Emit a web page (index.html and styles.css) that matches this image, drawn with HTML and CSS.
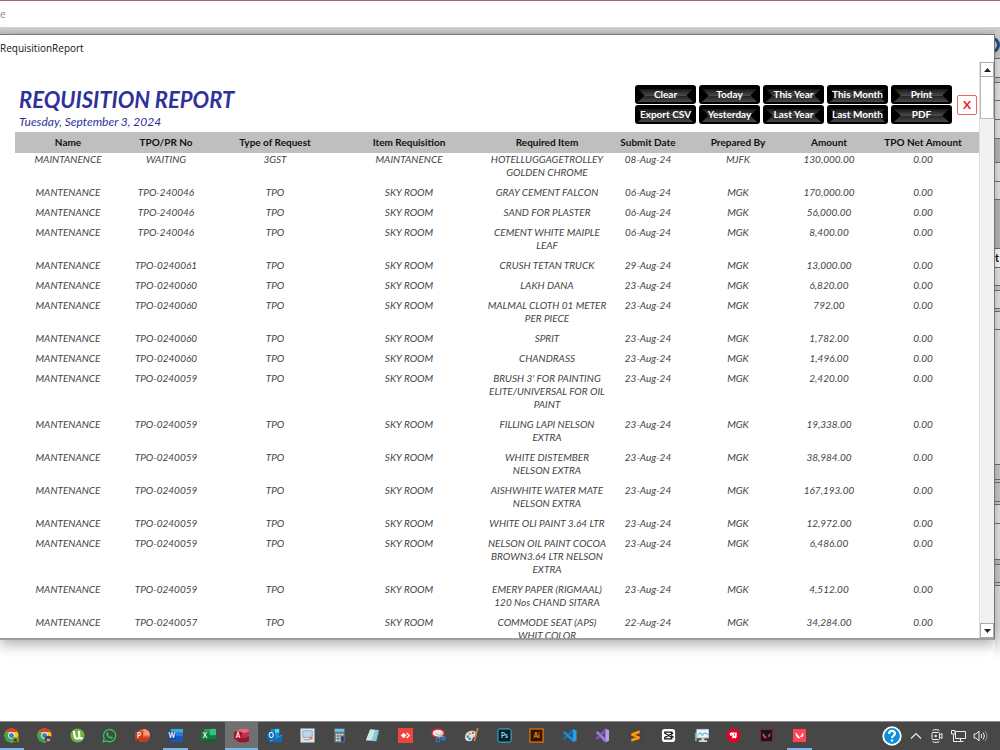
FILE: index.html
```
<!DOCTYPE html>
<html lang="en">
    <head>
        <meta charset="utf-8">
        <title>RequisitionReport</title>
        <link rel="stylesheet" href="styles.css">
    </head>
    <body>
        <div class="app-bar">e</div>

        <div class="workspace">
            <!-- report window -->
            <main class="window">
                <div class="caption">RequisitionReport</div>
                <div class="window-body">
                    <div class="report">
                        <div class="report-header">
                            <div class="heading">
                                <h1>REQUISITION REPORT</h1>
                                <p>Tuesday, September 3, 2024</p>
                            </div>
                            <div class="actions">
                                <button>Clear</button>
                                <button>Today</button>
                                <button>This Year</button>
                                <button>This Month</button>
                                <button>Print</button>
                                <button>Export CSV</button>
                                <button>Yesterday</button>
                                <button>Last Year</button>
                                <button>Last Month</button>
                                <button>PDF</button>
                            </div>
                            <button class="close">X</button>
                        </div>
                        <table class="list">
                            <colgroup>
                                <col class="col-name"><col class="col-no"><col class="col-type"><col class="col-req"><col class="col-item"><col class="col-date"><col class="col-by"><col class="col-amount"><col class="col-net">
                            </colgroup>
                            <thead>
                                <tr><th>Name</th><th>TPO/PR No</th><th>Type of Request</th><th>Item Requisition</th><th>Required Item</th><th>Submit Date</th><th>Prepared By</th><th>Amount</th><th>TPO Net Amount</th></tr>
                            </thead>
                            <tbody>
                                <tr><td>MAINTANENCE</td><td>WAITING</td><td>3GST</td><td>MAINTANENCE</td><td>HOTELLUGGAGETROLLEY GOLDEN CHROME</td><td>08-Aug-24</td><td>MJFK</td><td>130,000.00</td><td>0.00</td></tr>
                                <tr><td>MANTENANCE</td><td>TPO-240046</td><td>TPO</td><td>SKY ROOM</td><td>GRAY CEMENT FALCON</td><td>06-Aug-24</td><td>MGK</td><td>170,000.00</td><td>0.00</td></tr>
                                <tr><td>MANTENANCE</td><td>TPO-240046</td><td>TPO</td><td>SKY ROOM</td><td>SAND FOR PLASTER</td><td>06-Aug-24</td><td>MGK</td><td>56,000.00</td><td>0.00</td></tr>
                                <tr><td>MANTENANCE</td><td>TPO-240046</td><td>TPO</td><td>SKY ROOM</td><td>CEMENT WHITE MAIPLE LEAF</td><td>06-Aug-24</td><td>MGK</td><td>8,400.00</td><td>0.00</td></tr>
                                <tr><td>MANTENANCE</td><td>TPO-0240061</td><td>TPO</td><td>SKY ROOM</td><td>CRUSH TETAN TRUCK</td><td>29-Aug-24</td><td>MGK</td><td>13,000.00</td><td>0.00</td></tr>
                                <tr><td>MANTENANCE</td><td>TPO-0240060</td><td>TPO</td><td>SKY ROOM</td><td>LAKH DANA</td><td>23-Aug-24</td><td>MGK</td><td>6,820.00</td><td>0.00</td></tr>
                                <tr><td>MANTENANCE</td><td>TPO-0240060</td><td>TPO</td><td>SKY ROOM</td><td>MALMAL CLOTH 01 METER PER PIECE</td><td>23-Aug-24</td><td>MGK</td><td>792.00</td><td>0.00</td></tr>
                                <tr><td>MANTENANCE</td><td>TPO-0240060</td><td>TPO</td><td>SKY ROOM</td><td>SPRIT</td><td>23-Aug-24</td><td>MGK</td><td>1,782.00</td><td>0.00</td></tr>
                                <tr><td>MANTENANCE</td><td>TPO-0240060</td><td>TPO</td><td>SKY ROOM</td><td>CHANDRASS</td><td>23-Aug-24</td><td>MGK</td><td>1,496.00</td><td>0.00</td></tr>
                                <tr><td>MANTENANCE</td><td>TPO-0240059</td><td>TPO</td><td>SKY ROOM</td><td>BRUSH 3' FOR PAINTING ELITE/UNIVERSAL FOR OIL PAINT</td><td>23-Aug-24</td><td>MGK</td><td>2,420.00</td><td>0.00</td></tr>
                                <tr><td>MANTENANCE</td><td>TPO-0240059</td><td>TPO</td><td>SKY ROOM</td><td>FILLING LAPI NELSON EXTRA</td><td>23-Aug-24</td><td>MGK</td><td>19,338.00</td><td>0.00</td></tr>
                                <tr><td>MANTENANCE</td><td>TPO-0240059</td><td>TPO</td><td>SKY ROOM</td><td>WHITE DISTEMBER NELSON EXTRA</td><td>23-Aug-24</td><td>MGK</td><td>38,984.00</td><td>0.00</td></tr>
                                <tr><td>MANTENANCE</td><td>TPO-0240059</td><td>TPO</td><td>SKY ROOM</td><td>AISHWHITE WATER MATE NELSON EXTRA</td><td>23-Aug-24</td><td>MGK</td><td>167,193.00</td><td>0.00</td></tr>
                                <tr><td>MANTENANCE</td><td>TPO-0240059</td><td>TPO</td><td>SKY ROOM</td><td>WHITE OLI PAINT 3.64 LTR</td><td>23-Aug-24</td><td>MGK</td><td>12,972.00</td><td>0.00</td></tr>
                                <tr><td>MANTENANCE</td><td>TPO-0240059</td><td>TPO</td><td>SKY ROOM</td><td>NELSON OIL PAINT COCOA BROWN3.64 LTR NELSON EXTRA</td><td>23-Aug-24</td><td>MGK</td><td>6,486.00</td><td>0.00</td></tr>
                                <tr><td>MANTENANCE</td><td>TPO-0240059</td><td>TPO</td><td>SKY ROOM</td><td>EMERY PAPER (RIGMAAL) 120 Nos CHAND SITARA</td><td>23-Aug-24</td><td>MGK</td><td>4,512.00</td><td>0.00</td></tr>
                                <tr><td>MANTENANCE</td><td>TPO-0240057</td><td>TPO</td><td>SKY ROOM</td><td>COMMODE SEAT (APS) WHIT COLOR</td><td>22-Aug-24</td><td>MGK</td><td>34,284.00</td><td>0.00</td></tr>
                            </tbody>
                        </table>
                    </div>
                    <div class="scrollbar">
                        <button class="arrow" aria-label="Scroll up"><svg width="7" height="4" viewBox="0 0 7 4"><path d="M0 4L3.500 0L7 4z" fill="#222"/></svg></button>
                        <div class="thumb"></div>
                        <button class="arrow arrow-down" aria-label="Scroll down"><svg width="7" height="4" viewBox="0 0 7 4"><path d="M0 0L3.500 4L7 0z" fill="#222"/></svg></button>
                    </div>
                </div>
            </main>

            <!-- form behind the report -->
            <div class="behind">
                <div class="slot h32 mid"><svg class="ring" width="6" height="18" viewBox="0 0 6 18"><path d="M-5 2.500h2a6.500 6.500 0 0 1 0 13h-2" fill="none" stroke="#1f4e8c" stroke-width="3"/></svg></div>
                <div class="slot h19"></div>
                <div class="slot h5 mid"></div>
                <div class="slot h18"></div>
                <div class="slot h19"></div>
                <div class="slot h19"></div>
                <div class="slot h24 dark"></div>
                <div class="slot h19"></div>
                <div class="slot h18"></div>
                <div class="slot h49 dark"></div>
                <div class="slot h19 label">t</div>
                <div class="slot h18"></div>
                <div class="slot h5 mid"></div>
                <div class="slot h18"></div>
                <div class="slot h3 mid"></div>
                <div class="slot h18"></div>
                <div class="slot h135"></div>
                <div class="slot h15 mid"></div>
                <div class="slot h3 mid"></div>
                <div class="slot h19 mid"></div>
                <div class="slot h3 mid"></div>
                <div class="slot h19"></div>
                <div class="slot h36"></div>
                <div class="slot h5 dark"></div>
                <div class="slot h18 mid"></div>
                <div class="slot h3 mid"></div>
                <div class="fade"></div>
            </div>
        </div>

        <footer class="taskbar">
            <div class="apps">
                <span class="app open"><svg viewBox="0 0 16 16"><circle cx="8" cy="8" r="7.500" fill="#fbc116"/><path d="M1.500 4.250A7.500 7.500 0 0 1 14.500 4.250H8z" fill="#e33b2e"/><path d="M1.500 4.250A7.500 7.500 0 0 0 8 15.500l3-5.500H5z" fill="#2da94f"/><path d="M1.500 4.250L5 10V5z" fill="#2da94f"/><circle cx="8" cy="8" r="3.500" fill="#fff"/><circle cx="8" cy="8" r="2.700" fill="#3b7ded"/><path d="M9 10h7v5H9z" fill="#7c9621"/><path d="M10 13l2-2 3 3H10z" fill="#333f18"/></svg></span>
                <span class="app"><svg viewBox="0 0 16 16"><circle cx="8" cy="8" r="7.500" fill="#fbc116"/><path d="M1.500 4.250A7.500 7.500 0 0 1 14.500 4.250H8z" fill="#e33b2e"/><path d="M1.500 4.250A7.500 7.500 0 0 0 8 15.500l3-5.500H5z" fill="#2da94f"/><path d="M1.500 4.250L5 10V5z" fill="#2da94f"/><circle cx="8" cy="8" r="3.500" fill="#fff"/><circle cx="8" cy="8" r="2.700" fill="#3b7ded"/><circle cx="12" cy="12" r="3.700" fill="#4b3c3e"/><path d="M10 14l1-3 1 1 2-1v3z" fill="#c4a6a0"/></svg></span>
                <span class="app"><svg viewBox="0 0 16 16"><circle cx="8" cy="8" r="7.500" fill="#72b53d"/><path d="M4 3l1 6c.5 3 5 3 5 0L9.500 3M9.800 9c.4 2 2 2.500 3.800 1.500" fill="none" stroke="#fff" stroke-width="2.300"/></svg></span>
                <span class="app"><svg viewBox="0 0 16 16"><path d="M1.200 14.800l1.200-3.600A6.500 6.500 0 1 1 5 13.800z" fill="none" stroke="#2cc65b" stroke-width="1.400"/><path d="M5.500 4.500l1 .2.700 1.800-.8 1c.7 1.200 1.500 1.900 2.700 2.300l.9-1 1.700.9c0 1.300-1.200 2-2.500 1.700C6.800 10.800 5 9 4.600 7c-.1-1 .3-2 .9-2.500z" fill="#2cc65b"/></svg></span>
                <span class="app"><svg viewBox="0 0 16 16"><circle cx="9" cy="8" r="7" fill="#e5593b"/><path d="M9 1a7 7 0 0 1 7 7H9z" fill="#ff9575"/><path d="M2.500 10H15.700A7 7 0 0 1 3 11.500z" fill="#bd3c1d"/><rect x="0" y="4" width="8.500" height="8.500" rx="1" fill="#c43e1c"/><text x="4.300" y="10.900" class="glyph">P</text></svg></span>
                <span class="app open"><svg viewBox="0 0 16 16"><rect x="3" y="1" width="13" height="14" rx="1" fill="#185abd"/><path d="M3 1h13v4H3z" fill="#41a5ee"/><path d="M3 5h13v3.500H3z" fill="#2b7cd3"/><rect x="0" y="4" width="8.500" height="8.500" rx="1" fill="#144a9d"/><text x="4.300" y="10.900" class="glyph">W</text></svg></span>
                <span class="app"><svg viewBox="0 0 16 16"><rect x="3" y="1" width="13" height="14" rx="1" fill="#185c37"/><path d="M9 1h7v7H9z" fill="#33c481"/><path d="M3 1h6v7H3z" fill="#21a366"/><path d="M9 8h7v4H9z" fill="#107c41"/><rect x="0" y="4" width="8.500" height="8.500" rx="1" fill="#107c41"/><text x="4.300" y="10.900" class="glyph">X</text></svg></span>
                <span class="app open active"><svg viewBox="0 0 16 16"><path d="M3 3c0-3 13-3 13 0v10c0 3-13 3-13 0z" fill="#c2314c"/><path d="M3 3c0-3 13-3 13 0s-13 3-13 0z" fill="#e4697b"/><path d="M3 9c3 2 10 2 13 0v4c0 3-13 3-13 0z" fill="#94132e"/><rect x="0" y="4" width="8.500" height="8.500" rx="1" fill="#a4122f"/><text x="4.300" y="10.900" class="glyph">A</text></svg></span>
                <span class="app"><svg viewBox="0 0 16 16"><path d="M4 1h9v9H4z" fill="#1490df"/><path d="M8.500 1H13v4H8.500z" fill="#50d9ff"/><path d="M3 7l6 4 7-4v8H3z" fill="#28a8ea"/><path d="M3 15l13-7v7z" fill="#0f6cbd"/><rect x="0" y="4" width="8.500" height="8.500" rx="1" fill="#0f62b0"/><text x="4.300" y="10.900" class="glyph">O</text></svg></span>
                <span class="app"><svg viewBox="0 0 16 16"><rect x=".5" y=".5" width="15" height="15" fill="#dbe5ed"/><path d="M3 3h10v7H3z" fill="#c1d7ea" stroke="#8eabc4"/><path d="M4 12h6v1H4z" fill="#8ca0b0"/><circle cx="11.500" cy="10.500" r="2.500" fill="#e8afad"/><circle cx="11.500" cy="10.500" r="1" fill="#cd4943"/></svg></span>
                <span class="app"><svg viewBox="0 0 16 16"><path d="M2.500.5h11v15h-11z" fill="#6a7780"/><path d="M3 1h10v3H3z" fill="#66c6ec"/><path d="M4 6h2v2H4zM7 6h2v2H7zM10 6h2v2h-2zM4 9h2v2H4zM7 9h2v2H7zM4 12h2v2H4zM7 12h2v2H7z" fill="#dce4e9"/><path d="M10 9h2.500v5.500H10z" fill="#1c3f70"/></svg></span>
                <span class="app"><svg viewBox="0 0 16 16"><path d="M5.500 1.500L15 2l-3 12-11-1z" fill="#8cc9d5"/><path d="M5.500 1.500l5 .3L7 13.500 1 13z" fill="#c9eaec"/><path d="M1 13l11 1 3-12 .5 2-2.500 11z" fill="#466d77"/></svg></span>
                <span class="app"><svg viewBox="0 0 16 16"><path d="M0 0h16v16H0z" fill="#ef443b"/><path d="M6 5l3 3-3 3-3-3z" fill="#fff"/><path d="M8.500 5.500L10 5l3 3-3 3-1.500-.500L11 8z" fill="#fff"/></svg></span>
                <span class="app"><svg viewBox="0 0 16 16"><ellipse cx="7.500" cy="5.500" rx="6.500" ry="4.500" fill="#f1e7e7" stroke="#d3252d" stroke-width="1.500"/><path d="M5 6l9 4M12 5l-4 6" stroke="#b4bec8" stroke-width="1.500"/><circle cx="7.500" cy="12.500" r="2" fill="none" stroke="#287bbd" stroke-width="1.500"/><circle cx="13.500" cy="11" r="1.800" fill="none" stroke="#287bbd" stroke-width="1.500"/></svg></span>
                <span class="app"><svg viewBox="0 0 16 16"><path d="M1 10c0-5 5-8 9-7 4 1 4 5 2 6-2 .5-3 1-3 3 0 3-8 3-8-2z" fill="#d9e1e5"/><circle cx="4" cy="9" r="1.300" fill="#39a04d"/><circle cx="6" cy="6" r="1.300" fill="#e3a223"/><circle cx="9.500" cy="5.300" r="1.200" fill="#d5482f"/><circle cx="6" cy="11.500" r="1.300" fill="#2876c0"/><path d="M14.500 0L11 14" stroke="#c8873b" stroke-width="1.800"/></svg></span>
                <span class="app"><svg viewBox="0 0 16 16"><rect x="1" y="1" width="14" height="14" rx="2" fill="#071e2b" stroke="#31c5f0"/><text x="8" y="11" class="glyph ps">Ps</text></svg></span>
                <span class="app"><svg viewBox="0 0 16 16"><rect x="1" y="1" width="14" height="14" fill="#301500" stroke="#d86e08" stroke-width="1.500"/><text x="8" y="11" class="glyph ai">Ai</text></svg></span>
                <span class="app"><svg viewBox="0 0 16 16"><path d="M11.500 1L15.500 2.500v11l-4 1.500z" fill="#25a0ec"/><path d="M11.500 1v4L3 12.500 1 11z" fill="#0876bd"/><path d="M1 5l2-1.500L11.500 11v4z" fill="#178dd4"/></svg></span>
                <span class="app"><svg viewBox="0 0 16 16"><path d="M11 .5l4 2v11l-4 2z" fill="#b79be8"/><path d="M11 .5v4.500L3 12.500 1 11.500v-7L3 3.500 11 11v4.500L.8 5.500v5z" fill="#8150ba"/><path d="M1 4.500L3 3.500 11 11v4.500z" fill="#a277dc"/></svg></span>
                <span class="app"><svg viewBox="0 0 16 16"><rect x="1" y="1" width="14" height="14" rx="2" fill="#444"/><path d="M3.500 5.500l9-3v3.200L7.500 7.400l5 1.600v2.700l-9 3v-3.200l5-1.600-5-1.700z" fill="#ff9800"/></svg></span>
                <span class="app"><svg viewBox="0 0 16 16"><rect x="1" y="1" width="14" height="14" rx="3" fill="#fff"/><path d="M13 5.500L4 10v1.500h7.500V10L4 5.500V4.500h7.500V6M11 8l2.500 2" fill="none" stroke="#111" stroke-width="1.300"/></svg></span>
                <span class="app"><svg viewBox="0 0 16 16"><path d="M1 5h2v9H1z" fill="#85a9a1"/><path d="M3 1.500h12.500v9H3z" fill="#e7f6fc" stroke="#becbd0"/><path d="M4 7l3-2 2 3 2-3 4 2" fill="none" stroke="#349ccb"/><path d="M8 11h3v2h3v2H5v-2h3z" fill="#d4dcdf"/></svg></span>
                <span class="app"><svg viewBox="0 0 16 16"><circle cx="8" cy="8" r="7.500" fill="#e60028"/><path d="M4 5.500l2-1 1 .6L8.500 4.500l1 .6 2-.4v4.300L10 11.500l-1-1-3 .3 1-2-3-1z" fill="#fff"/><path d="M6 7l1 1M9 6v2" stroke="#e60028"/></svg></span>
                <span class="app"><svg viewBox="0 0 16 16"><path d="M1.500 1.500h13v13h-13z" fill="#121722" stroke="#8e2434"/><path d="M4 5l4.500 6H6L4 8.300zM12 5v3.300l-1 1H9z" fill="#f44353"/></svg></span>
                <span class="app open"><svg viewBox="0 0 16 16"><path d="M1 1h14v14H1z" fill="#ff4656"/><path d="M4 4.500L9 11H6.500L4 8zM12 4.500V8l-1 1.500H8.500z" fill="#fff"/></svg></span>
            </div>
            <div class="tray">
                <svg width="20" height="20" viewBox="0 0 20 20"><circle cx="10" cy="10" r="8.800" fill="#0b8fdb" stroke="#fff" stroke-width="1.800"/><path d="M7 8c0-4 6-4 6-.5C13 9.500 10 10 10 12" fill="none" stroke="#fff" stroke-width="2.200"/><circle cx="10" cy="14.500" r="1.300" fill="#fff"/></svg>
                <svg width="14" height="14" viewBox="0 0 14 14"><path d="M2 9.500l5-5 5 5" fill="none" stroke="#eee" stroke-width="1.200"/></svg>
                <svg width="14" height="14" viewBox="0 0 14 14"><rect x="2" y="3.500" width="7.500" height="7" rx="1" fill="none" stroke="#eee"/><path d="M9.500 6l2.500-1.500v5L9.500 8M2.500 1.500C4 .3 8 .3 9.500 1.500M2.500 12.500c1.500 1.200 5.500 1.200 7 0" fill="none" stroke="#eee"/><circle cx="5.700" cy="7" r="1.200" fill="#eee"/></svg>
                <svg width="15" height="14" viewBox="0 0 15 14"><path d="M4.500 2.500h10v7h-10zM9.500 9.500v3M6.500 12.500h6M2.500 5.500v7h4" fill="none" stroke="#eee"/><path d="M.5 1.500h3.500v3.500H.5z" fill="#4a4a4a" stroke="#eee"/></svg>
                <svg width="15" height="14" viewBox="0 0 15 14"><path d="M1 5h2l3-3v10L3 9H1zM8 5q1.500 2 0 4M10 3.500q3 3.500 0 7" fill="none" stroke="#eee"/><path d="M12 2q4 5 0 10" fill="none" stroke="#999"/></svg>
            </div>
        </footer>
    </body>
</html>
```

FILE: styles.css
```
*{
    margin: 0;
    padding: 0;
    box-sizing: border-box;
}
body{
    display: flex;
    flex-direction: column;
    height: 100vh;
    overflow: hidden;
    background-color: #fff;
    font-family: Lato, "Open Sans", sans-serif;
    color: #111;
}
.app-bar{
    height: 27px;
    border-top: 1px solid #a5686e;
    font: 10px/26px "Open Sans", sans-serif;
    color: #888;
}
.workspace{
    flex: 1;
    min-height: 0;
    display: flex;
    align-items: stretch;
    background: linear-gradient(#d2d2d2, #bdbdbd) top / 100% 7px no-repeat;
}

/* window */
.window{
    position: relative;
    z-index: 1;
    flex: 1;
    min-width: 0;
    display: flex;
    flex-direction: column;
    margin: 7px 0 81px;
    background-color: #fff;
    border: 1px solid #777;
    border-left: 0;
    border-bottom: 2px solid #9c9f9e;
    box-shadow: 0 5px 12px rgba(0, 0, 0, 0.3);
}
.caption{
    height: 27px;
    font: 10px/27px "Open Sans", sans-serif;
    color: #111;
}
.window-body{
    flex: 1;
    min-height: 0;
    display: flex;
}
.report{
    flex: 1;
    min-width: 0;
    overflow: hidden;
    padding-left: 15px;
}
.report-header{
    display: flex;
    align-items: flex-start;
    height: 70px;
    padding: 23px 2px 0 4px;
}
.heading{
    flex: 1;
    color: #2e3199;
    font-style: italic;
}
.heading h1{
    font-size: 22px;
    line-height: 30px;
}
.heading p{
    font-size: 12px;
    line-height: 14px;
}
.actions{
    display: grid;
    grid-template-columns: repeat(5, 61px);
    gap: 1px 3px;
}
.actions button{
    position: relative;
    z-index: 0;
    height: 19px;
    border: 0;
    border-radius: 3px;
    background-color: #000;
    color: #fff;
    font: bold 10px/18px Lato, sans-serif;
    padding-bottom: 1px;
    white-space: nowrap;
}
.actions button::before{
    content: "";
    position: absolute;
    z-index: -1;
    inset: 4px 3px 2px;
    background: linear-gradient(#151515, #4a4a4a 50%, #222 50%, #484848);
    clip-path: polygon(0 0, 100% 0, 88% 50%, 100% 100%, 0 100%, 12% 50%);
}
.close{
    width: 20px;
    height: 20px;
    margin: 10px 0 0 5px;
    border: 1px solid #f0626a;
    border-radius: 2px;
    background-color: #fff;
    color: #ed1c24;
    font: bold 12px/18px Lato, sans-serif;
}

/* list */
.list{
    width: 100%;
    table-layout: fixed;
    border-collapse: collapse;
    text-align: center;
}
.list th{
    height: 21px;
    background-color: #bfbfbf;
    font-size: 10px;
    line-height: 13px;
    white-space: nowrap;
}
.list td{
    padding: 0 3px 7px;
    vertical-align: top;
    font-size: 10px;
    line-height: 13px;
    font-style: italic;
    color: #444;
}
.list th:first-child{
    padding-left: 4px;
}
.list td:first-child{
    padding-left: 7px;
}
.col-name{
    width: 102px;
}
.col-no{
    width: 98px;
}
.col-type{
    width: 120px;
}
.col-req{
    width: 148px;
}
.col-item{
    width: 128px;
}
.col-date{
    width: 74px;
}
.col-by{
    width: 106px;
}
.col-amount{
    width: 76px;
}
.col-net{
    width: 112px;
}

.scrollbar{
    width: 15px;
    display: flex;
    flex-direction: column;
    background-color: #f1f1f1;
    border-left: 1px solid #ddd;
}
.arrow{
    display: flex;
    align-items: center;
    justify-content: center;
    height: 15px;
    border: 1px solid #aaa;
    background-color: #fff;
}
.arrow-down{
    margin-top: auto;
}
.thumb{
    height: 42px;
    border: 1px solid #bbb;
    border-top: 0;
    background-color: #fff;
}

/* strip of the form behind */
.behind{
    width: 5px;
    overflow: hidden;
    background-color: #e2e2e2;
}
.slot{
    border-bottom: 1px solid #6a7078;
    background-color: #e8e8e8;
}
.mid{
    background-color: #ccc;
}
.dark{
    background-color: #bbb;
}
.ring{
    display: block;
    margin-top: 9px;
}
.label{
    font-size: 11px;
    line-height: 17px;
    font-weight: bold;
    background-color: #fff;
}
.h3{
    height: 3px;
}
.h5{
    height: 5px;
}
.h15{
    height: 15px;
}
.h18{
    height: 18px;
}
.h19{
    height: 19px;
}
.h24{
    height: 24px;
}
.h32{
    height: 32px;
    overflow: hidden;
}
.h36{
    height: 36px;
}
.h49{
    height: 49px;
}
.h135{
    height: 135px;
}
.fade{
    height: 200px;
    background: linear-gradient(#e0e0e0 40px, #fff 75px);
}

/* taskbar */
.taskbar{
    display: flex;
    align-items: stretch;
    justify-content: space-between;
    height: 29px;
    border-top: 1px solid #8c8c8c;
    background-color: #474747;
}
.apps{
    display: flex;
    width: 821px;
    margin-left: -5px;
}
.app{
    flex: 1;
    display: flex;
    align-items: center;
    justify-content: center;
    border-bottom: 2px solid transparent;
    background-clip: padding-box;
}
.app svg{
    width: 15px;
    height: 15px;
}
.open{
    background: linear-gradient(#76b9ed, #76b9ed) bottom / 25px 2px no-repeat border-box;
}
.active{
    background-color: #707070;
    background-size: 100% 2px;
}
.glyph{
    font: bold 7px Lato, sans-serif;
    fill: #fff;
    text-anchor: middle;
}
.ps{
    fill: #9fe2f8;
}
.ai{
    fill: #ff9a00;
}
.tray{
    display: flex;
    align-items: center;
    gap: 7px;
    padding-right: 12px;
}
```
